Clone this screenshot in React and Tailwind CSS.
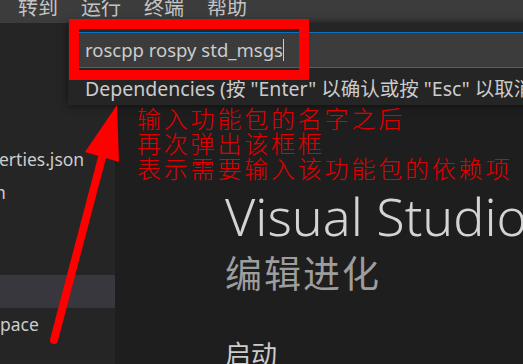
import React from "react"

const ui = { fontFamily: '"Noto Sans", "Noto Sans CJK SC", sans-serif' }
const cjk = { fontFamily: '"Noto Sans CJK SC", "Noto Sans", sans-serif' }

const menus = ["转到", "运行", "终端", "帮助"]

const rows = [
  { label: "erties.json", shift: "ml-[-1px]" },
  { label: "n", shift: "ml-[-5px]" },
  { label: "" },
  { label: "" },
  { label: "", active: true },
  { label: "pace", shift: "ml-0" },
]

const Arrow = () => (
  <svg className="absolute inset-0 pointer-events-none" width="523" height="364" viewBox="0 0 523 364">
    <line x1="54" y1="340" x2="104" y2="150" stroke="#ff0000" strokeWidth="8" strokeLinecap="round" />
    <polygon points="117,105 85,152 119,162" fill="#ff0000" />
  </svg>
)

const App = () => {
  return (
    <div className="relative w-[523px] h-[364px] overflow-hidden bg-[#1e1e1e]" style={ui}>
      {/* menu bar */}
      <div className="h-[23px] bg-[#3c3c3c] flex gap-[23px] pl-[18px] overflow-hidden" style={cjk}>
        {menus.map(m => (
          <span key={m} className="text-[20px] leading-[20px] mt-[-3px] text-[#c4c4c4]">
            {m}
          </span>
        ))}
      </div>

      <div className="flex h-[341px]">
        {/* sidebar */}
        <div className="w-[115px] bg-[#252526] pt-[120px] overflow-hidden">
          {rows.map((r, i) => (
            <div
              key={i}
              className={`h-[33px] flex items-center whitespace-nowrap text-[17.5px] text-[#cccccc] ${r.active ? "bg-[#37373d]" : ""}`}
            >
              <span className={r.shift}>{r.label}</span>
            </div>
          ))}
        </div>

        {/* editor welcome */}
        <div className="flex-1 bg-[#1e1e1e] pl-[110px] pt-[165px] overflow-hidden whitespace-nowrap">
          <div className="text-[52px] leading-[56px] font-light text-[#d4d4d4]">Visual Studio Code</div>
          <div className="text-[37px] leading-[44px] mt-[6px] text-[#9d9d9d] tracking-[2px]" style={cjk}>
            编辑进化
          </div>
          <div className="text-[26px] leading-[30px] mt-[44px] text-[#cccccc]" style={cjk}>
            启动
          </div>
        </div>
      </div>

      {/* quick input */}
      <div className="absolute left-[68px] top-[23px] w-[470px] h-[82px] bg-[#252526] shadow-[0_0_8px_rgba(0,0,0,0.6)] pl-[10px] pt-[9px]">
        <div className="h-[36px] border border-[#0e70c0] bg-[#3c3c3c] flex items-center pl-[6px]">
          <span className="text-[18.5px] text-[#cccccc]">roscpp rospy std_msgs</span>
          <span className="w-px h-[22px] bg-[#cccccc]" />
        </div>
        <div className="mt-[9px] pl-[7px] text-[19.5px] leading-[24px] text-[#cccccc] whitespace-nowrap" style={ui}>
          Dependencies (按 "Enter" 以确认或按 "Esc" 以取消)
        </div>
      </div>

      {/* red highlight box */}
      <div className="absolute left-[69px] top-[19px] w-[240px] h-[61px] border-[10px] border-[#ff0000]" />

      {/* annotation */}
      <div
        className="absolute left-[137px] top-[105px] text-[24px] leading-[25px] tracking-[2.8px] text-[#e00000] font-light whitespace-nowrap"
        style={cjk}
      >
        <div>输入功能包的名字之后</div>
        <div>再次弹出该框框</div>
        <div>表示需要输入该功能包的依赖项</div>
      </div>

      <Arrow />
    </div>
  )
}

export default App
